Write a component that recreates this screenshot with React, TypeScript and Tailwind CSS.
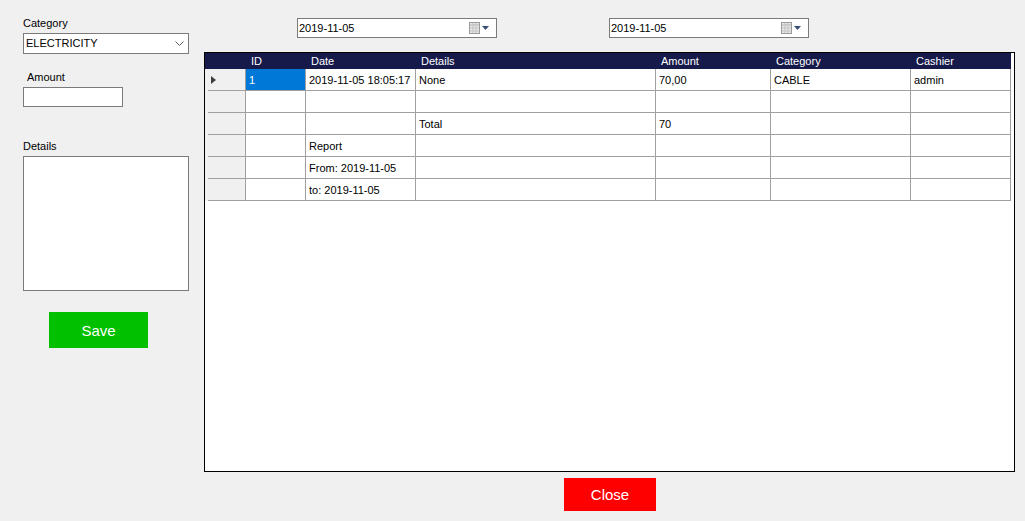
import React from "react";

const cols = [
  { key: "id", label: "ID", w: "w-[60px]" },
  { key: "date", label: "Date", w: "w-[110px]" },
  { key: "details", label: "Details", w: "w-[240px]" },
  { key: "amount", label: "Amount", w: "w-[115px]" },
  { key: "category", label: "Category", w: "w-[140px]" },
  { key: "cashier", label: "Cashier", w: "w-[100px]" },
];

const rows: string[][] = [
  ["1", "2019-11-05 18:05:17", "None", "70,00", "CABLE", "admin"],
  ["", "", "", "", "", ""],
  ["", "", "Total", "70", "", ""],
  ["", "Report", "", "", "", ""],
  ["", "From: 2019-11-05", "", "", "", ""],
  ["", "to: 2019-11-05", "", "", "", ""],
];

function CalendarIcon() {
  return (
    <svg width="22" height="12" viewBox="0 0 22 12">
      <rect x="0.5" y="0.5" width="10" height="11" fill="#e8e8e8" stroke="#9a9a9a" />
      <line x1="1" y1="3" x2="10" y2="3" stroke="#b0b0b0" />
      <line x1="1" y1="6" x2="10" y2="6" stroke="#c4c4c4" />
      <line x1="1" y1="9" x2="10" y2="9" stroke="#c4c4c4" />
      <line x1="4" y1="1" x2="4" y2="11" stroke="#c4c4c4" />
      <line x1="7" y1="1" x2="7" y2="11" stroke="#c4c4c4" />
      <polygon points="13,4 20,4 16.5,8" fill="#3c4d73" />
    </svg>
  );
}

function DatePicker() {
  return (
    <div className="w-[200px] h-[20px] bg-white border border-[#7a7a7a] flex items-center pl-[1px] pr-[5px]">
      <span className="flex-1 text-[11px] leading-none text-black">2019-11-05</span>
      <CalendarIcon />
    </div>
  );
}

export default function App() {
  return (
    <div
      className="w-[1025px] h-[521px] bg-[#f0f0f0] flex text-black overflow-hidden"
      style={{ fontFamily: '"Liberation Sans", Arial, sans-serif' }}
    >
      {/* Left panel */}
      <div className="w-[204px] shrink-0 pl-[23px] pt-[17px] flex flex-col">
        <div className="text-[11px] leading-[13px]">Category</div>
        <div className="mt-[3px] w-[166px] h-[21px] bg-white border border-[#7a7a7a] flex items-center pl-[2px] pr-[4px]">
          <span className="flex-1 text-[11px] leading-none">ELECTRICITY</span>
          <svg width="9" height="6" viewBox="0 0 9 6">
            <polyline points="0.5,0.5 4.5,4.5 8.5,0.5" fill="none" stroke="#606060" strokeWidth="1" />
          </svg>
        </div>
        <div className="mt-[17px] ml-[4px] text-[11px] leading-[13px]">Amount</div>
        <div className="mt-[3px] w-[100px] h-[20px] bg-white border border-[#7a7a7a]" />
        <div className="mt-[33px] text-[11px] leading-[13px]">Details</div>
        <div className="mt-[3px] w-[166px] h-[135px] bg-white border border-[#7a7a7a]" />
        <button className="mt-[21px] ml-[26px] w-[99px] h-[36px] bg-[#00c000] text-white text-[15px] leading-none flex items-center justify-center">
          Save
        </button>
      </div>

      {/* Right panel */}
      <div className="flex flex-col pt-[18px]">
        <div className="flex pl-[93px] gap-[112px]">
          <DatePicker />
          <DatePicker />
        </div>

        <div className="mt-[14px] w-[811px] h-[420px] bg-white border border-black flex flex-col">
          {/* header */}
          <div className="flex h-[16px] bg-[#161a4a] text-white text-[11px] leading-[16px] w-[806px]">
            <div className="w-[41px]" />
            {cols.map((c) => (
              <div key={c.key} className={`${c.w} pl-[5px]`}>
                {c.label}
              </div>
            ))}
          </div>
          {rows.map((r, ri) => (
            <div key={ri} className="flex h-[22px] text-[11px]">
              <div className="w-[41px] h-[22px] bg-[#f0f0f0] border-r border-[#a0a0a0] flex flex-col">
                <div className="h-[21px] flex items-center pl-[6px]">
                  {ri === 0 && (
                    <svg width="5" height="8" viewBox="0 0 5 8">
                      <polygon points="0,0 5,4 0,8" fill="#404040" />
                    </svg>
                  )}
                </div>
                <div className="h-px ml-[3px] bg-[#a0a0a0]" />
              </div>
              {cols.map((c, ci) => {
                const sel = ri === 0 && ci === 0;
                return (
                  <div
                    key={c.key}
                    className={`${c.w} h-[22px] border-r border-b border-[#a0a0a0] flex items-center pl-[3px] pt-px ${
                      sel ? "bg-[#0078d7] text-white" : "bg-white"
                    }`}
                  >
                    {r[ci]}
                  </div>
                );
              })}
            </div>
          ))}
        </div>

        <button className="mt-[6px] ml-[360px] w-[92px] h-[33px] bg-[#ff0000] text-white text-[15px] leading-none flex items-center justify-center">
          Close
        </button>
      </div>
    </div>
  );
}
